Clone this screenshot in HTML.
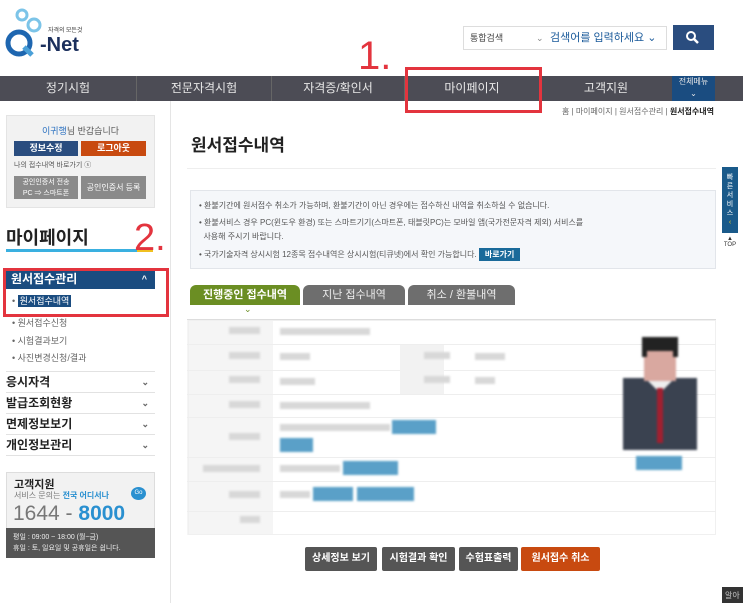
<!DOCTYPE html>
<html><head><meta charset="utf-8"><style>
*{margin:0;padding:0;box-sizing:border-box}
body{width:743px;height:603px;overflow:hidden;background:#fff;font-family:"Liberation Sans","Noto Sans CJK KR",sans-serif;position:relative;color:#333}
.a{position:absolute}
.nav{left:0;top:76px;width:743px;height:25px;background:#4c4c55}
.nav div{position:absolute;top:0;height:25px;line-height:25px;text-align:center;color:#e8e8e8;font-size:12px;border-right:1px solid #666}
.acc{left:6px;width:149px;height:21px;border-bottom:1px solid #e2e2e2;font-size:12px;font-weight:bold;color:#222;line-height:21px}
.acc span{position:absolute;right:6px;font-size:9px;color:#666}
.sub{left:12px;font-size:9px;color:#666}
.btn{top:547px;height:24px;line-height:24px;color:#fff;font-size:10px;font-weight:bold;text-align:center;border-radius:2px;background:#555}
.row{left:187px;width:529px;border-bottom:1px solid #eee}
.blur{background:#d8d8d8;height:7px;filter:blur(1px)}
.bl{background:#5aa0c8;height:14px;filter:blur(1px)}
</style></head><body>
<svg class="a" style="left:4px;top:3px" width="90" height="56">
<circle cx="18" cy="12" r="5" fill="none" stroke="#7cc4e8" stroke-width="3"/>
<circle cx="30" cy="22" r="6" fill="none" stroke="#7cc4e8" stroke-width="3"/>
<circle cx="15" cy="40" r="11" fill="none" stroke="#1e66b0" stroke-width="5"/>
<path d="M20 44 L28 52" stroke="#4aa0d8" stroke-width="5"/>
<text x="36" y="48" font-family="Liberation Sans" font-weight="bold" font-size="20" fill="#1b2f5c">-Net</text>
<text x="44" y="29" font-size="6" fill="#333" font-family="Noto Sans CJK KR">자격의 모든것</text>
</svg>
<div class="a" style="left:463px;top:26px;width:204px;height:24px;border:1px solid #ddd;font-size:9px;line-height:22px;color:#444;padding-left:6px">통합검색<span style="position:absolute;left:72px;color:#888">⌄</span><span style="position:absolute;left:86px;color:#1a5a9a;font-size:11px">검색어를 입력하세요 ⌄</span></div>
<div class="a" style="left:673px;top:25px;width:41px;height:25px;background:#2a4d7f"><svg width="41" height="25"><circle cx="18" cy="11" r="4" fill="none" stroke="#fff" stroke-width="2"/><path d="M21 14 L25 18" stroke="#fff" stroke-width="2.5"/></svg></div>
<div class="a" style="left:358px;top:36px;color:#e3343e;font-size:40px;line-height:40px">1.</div>
<div class="a nav">
<div style="left:0;width:137px">정기시험</div>
<div style="left:137px;width:135px">전문자격시험</div>
<div style="left:272px;width:133px">자격증/확인서</div>
<div style="left:405px;width:135px">마이페이지</div>
<div style="left:540px;width:132px;border:none">고객지원</div>
<div style="left:672px;width:43px;background:#1a4c80;font-size:8px;line-height:12px;border:none">전체메뉴<br>⌄</div>
</div>
<div class="a" style="left:405px;top:67px;width:137px;height:46px;border:3px solid #e3343e"></div>
<div class="a" style="right:29px;top:106px;font-size:8px;color:#666">홈 | 마이페이지 | 원서접수관리 | <b style="color:#222">원서접수내역</b></div>
<div class="a" style="left:170px;top:101px;width:1px;height:502px;background:#e5e5e5"></div>
<div class="a" style="left:6px;top:115px;width:149px;height:93px;background:#f2f2f2;border:1px solid #e4e4e4"></div>
<div class="a" style="left:6px;top:124px;width:149px;text-align:center;font-size:9px;color:#555"><span style="color:#2a70c0">이귀행</span>님 반갑습니다</div>
<div class="a" style="left:14px;top:141px;width:64px;height:15px;background:#2a4d7f;color:#fff;font-size:9px;text-align:center;line-height:15px;font-weight:bold">정보수정</div>
<div class="a" style="left:81px;top:141px;width:65px;height:15px;background:#c84a10;color:#fff;font-size:9px;text-align:center;line-height:15px;font-weight:bold">로그아웃</div>
<div class="a" style="left:14px;top:160px;font-size:7px;color:#555">나의 접수내역 바로가기 ⓢ</div>
<div class="a" style="left:14px;top:176px;width:64px;height:23px;background:#8a8a8a;color:#fff;font-size:7px;text-align:center;line-height:11px;padding-top:1px">공인인증서 전송<br>PC ⇒ 스마트폰</div>
<div class="a" style="left:81px;top:176px;width:65px;height:23px;background:#8a8a8a;color:#fff;font-size:8px;text-align:center;line-height:23px">공인인증서 등록</div>
<div class="a" style="left:6px;top:224px;font-size:18px;font-weight:bold;color:#222">마이페이지</div>
<div class="a" style="left:6px;top:249px;width:140px;height:3px;background:#3ab0e0"></div>
<div class="a" style="left:137px;top:249px;width:16px;height:3px;background:#f0c020"></div>
<div class="a" style="left:134px;top:218px;color:#e3343e;font-size:38px;line-height:40px">2.</div>
<div class="a" style="left:6px;top:270px;width:149px;height:19px;background:#1a4c80;color:#fff;font-size:12px;font-weight:bold;line-height:19px;padding-left:5px">원서접수관리<span style="position:absolute;right:8px;font-size:9px">^</span></div>
<div class="a" style="left:3px;top:268px;width:166px;height:49px;border:3px solid #e3343e"></div>
<div class="a sub" style="top:294px">• <span style="background:#1a4c80;color:#fff;padding:1px 2px">원서접수내역</span></div>
<div class="a sub" style="top:316px">• 원서접수신청</div>
<div class="a sub" style="top:334px">• 시험결과보기</div>
<div class="a sub" style="top:351px">• 사진변경신청/결과</div>
<div class="a" style="left:6px;top:371px;width:149px;height:1px;background:#e2e2e2"></div>
<div class="a acc" style="top:372px">응시자격<span>⌄</span></div>
<div class="a acc" style="top:393px">발급조회현황<span>⌄</span></div>
<div class="a acc" style="top:414px">면제정보보기<span>⌄</span></div>
<div class="a acc" style="top:435px">개인정보관리<span>⌄</span></div>
<div class="a" style="left:6px;top:472px;width:149px;height:86px;background:#f2f2f2;border:1px solid #ddd"></div>
<div class="a" style="left:14px;top:476px;font-size:11px;font-weight:bold;color:#222">고객지원</div>
<div class="a" style="left:14px;top:490px;font-size:8px;color:#777">서비스 문의는 <b style="color:#2a90d0">전국 어디서나</b></div>
<div class="a" style="left:131px;top:487px;width:15px;height:13px;background:#2a90d0;border-radius:50%;color:#fff;font-size:6px;text-align:center;line-height:13px">Go</div>
<div class="a" style="left:13px;top:502px;font-size:21px;color:#777;line-height:24px">1644 - <b style="color:#2a90d0">8000</b></div>
<div class="a" style="left:6px;top:528px;width:149px;height:30px;background:#555;color:#eee;font-size:7px;line-height:11px;padding:4px 0 0 7px">평일 : 09:00 ~ 18:00 (월~금)<br>휴일 : 토, 일요일 및 공휴일은 쉽니다.</div>
<div class="a" style="left:191px;top:131px;font-size:17px;font-weight:bold;color:#222">원서접수내역</div>
<div class="a" style="left:187px;top:168px;width:529px;height:1px;background:#eee"></div>
<div class="a" style="left:190px;top:190px;width:526px;height:79px;background:#f5f7fa;border:1px solid #e2e5ea"></div>
<div class="a" style="left:199px;top:197px;font-size:8px;color:#555;line-height:17px">
<div>• 환불기간에 원서접수 취소가 가능하며, 환불기간이 아닌 경우에는 접수하신 내역을 취소하실 수 없습니다.</div>
<div style="line-height:14px;margin-top:2px">• 환불서비스 경우 PC(윈도우 환경) 또는 스마트기기(스마트폰, 태블릿PC)는 모바일 앱(국가전문자격 제외) 서비스를<br>&nbsp;&nbsp;사용해 주시기 바랍니다.</div>
<div style="margin-top:2px">• 국가기술자격 상시시험 12종목 접수내역은 상시시험(티큐넷)에서 확인 가능합니다. <span style="background:#1a6a9a;color:#fff;padding:2px 6px;font-weight:bold">바로가기</span></div>
</div>
<div class="a" style="left:190px;top:285px;width:110px;height:20px;background:#6b8e23;border-radius:6px 6px 0 0;color:#fff;font-size:11px;text-align:center;line-height:20px;font-weight:bold">진행중인 접수내역</div>
<div class="a" style="left:303px;top:285px;width:102px;height:20px;background:#6e6e6e;border-radius:6px 6px 0 0;color:#eee;font-size:11px;text-align:center;line-height:20px">지난 접수내역</div>
<div class="a" style="left:408px;top:285px;width:107px;height:20px;background:#6e6e6e;border-radius:6px 6px 0 0;color:#eee;font-size:11px;text-align:center;line-height:20px">취소 / 환불내역</div>
<div class="a" style="left:244px;top:304px;color:#6b8e23;font-size:9px">⌄</div>
<div class="a" style="left:187px;top:319px;width:529px;height:1px;background:#ddd"></div>
<div class="a" style="left:187px;top:320px;width:86px;height:215px;background:#f5f5f5"></div>
<div class="a" style="left:188px;top:320px;width:528px;height:215px;border:1px solid #f0f0f0"></div>
<div class="a row" style="top:344px"></div><div class="a row" style="top:370px"></div><div class="a row" style="top:394px"></div><div class="a row" style="top:417px"></div><div class="a row" style="top:457px"></div><div class="a row" style="top:481px"></div><div class="a row" style="top:511px"></div>
<div class="a" style="left:400px;top:345px;width:44px;height:49px;background:#f2f2f2"></div>
<div class="a blur" style="left:229px;top:327px;width:31px"></div><div class="a blur" style="left:280px;top:328px;width:90px"></div>
<div class="a blur" style="left:229px;top:352px;width:31px"></div><div class="a blur" style="left:280px;top:353px;width:30px"></div><div class="a blur" style="left:424px;top:352px;width:26px"></div><div class="a blur" style="left:475px;top:353px;width:30px"></div>
<div class="a blur" style="left:229px;top:376px;width:31px"></div><div class="a blur" style="left:280px;top:378px;width:35px"></div><div class="a blur" style="left:424px;top:376px;width:26px"></div><div class="a blur" style="left:475px;top:377px;width:20px"></div>
<div class="a blur" style="left:229px;top:401px;width:31px"></div><div class="a blur" style="left:280px;top:402px;width:90px"></div>
<div class="a blur" style="left:229px;top:433px;width:31px"></div><div class="a blur" style="left:280px;top:424px;width:110px"></div>
<div class="a bl" style="left:392px;top:420px;width:44px"></div><div class="a bl" style="left:280px;top:438px;width:33px"></div>
<div class="a blur" style="left:203px;top:465px;width:57px"></div><div class="a blur" style="left:280px;top:465px;width:60px"></div><div class="a bl" style="left:343px;top:461px;width:55px"></div>
<div class="a blur" style="left:229px;top:491px;width:31px"></div><div class="a blur" style="left:280px;top:491px;width:30px"></div><div class="a bl" style="left:313px;top:487px;width:40px"></div><div class="a bl" style="left:357px;top:487px;width:57px"></div>
<div class="a blur" style="left:240px;top:516px;width:20px"></div>
<svg class="a" style="left:620px;top:333px;filter:blur(1px)" width="80" height="118">
<rect x="3" y="45" width="74" height="72" fill="#3a4250"/>
<path d="M25 45 L40 60 L55 45 Z" fill="#eee"/>
<rect x="37" y="55" width="6" height="55" fill="#a02030"/>
<rect x="24" y="12" width="32" height="36" fill="#d9a8a0"/>
<rect x="22" y="4" width="36" height="14" fill="#222"/>
<rect x="22" y="10" width="5" height="14" fill="#222"/><rect x="53" y="10" width="5" height="14" fill="#222"/>
</svg>
<div class="a bl" style="left:636px;top:456px;width:46px"></div>
<div class="a btn" style="left:305px;width:72px">상세정보 보기</div>
<div class="a btn" style="left:382px;width:73px">시험결과 확인</div>
<div class="a btn" style="left:459px;width:59px">수험표출력</div>
<div class="a btn" style="left:521px;width:79px;background:#c84a10">원서접수 취소</div>
<div class="a" style="left:722px;top:167px;width:16px;height:66px;background:#1a5a8a;color:#fff;font-size:7px;text-align:center;line-height:9px;padding-top:6px">빠<br>른<br>서<br>비<br>스<br><span style="color:#f0d020">‹</span></div>
<div class="a" style="left:722px;top:236px;width:16px;font-size:6px;text-align:center;color:#333">▲<br>TOP</div>
<div class="a" style="left:722px;top:587px;width:21px;height:16px;background:#333;color:#ccc;font-size:8px;padding:3px">알아</div>
</body></html>
